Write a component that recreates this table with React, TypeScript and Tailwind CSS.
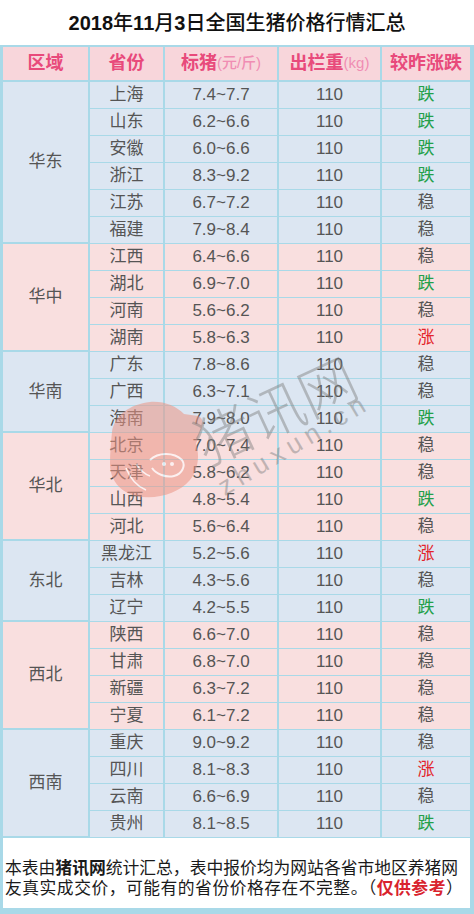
import React from 'react';

type Trend = '跌' | '稳' | '涨';
type Group = { region: string; tone: 'blue' | 'pink'; rows: [string, string, Trend][] };

const groups: Group[] = [
  {
    region: '华东',
    tone: 'blue',
    rows: [
      ['上海', '7.4~7.7', '跌'],
      ['山东', '6.2~6.6', '跌'],
      ['安徽', '6.0~6.6', '跌'],
      ['浙江', '8.3~9.2', '跌'],
      ['江苏', '6.7~7.2', '稳'],
      ['福建', '7.9~8.4', '稳'],
    ],
  },
  {
    region: '华中',
    tone: 'pink',
    rows: [
      ['江西', '6.4~6.6', '稳'],
      ['湖北', '6.9~7.0', '跌'],
      ['河南', '5.6~6.2', '稳'],
      ['湖南', '5.8~6.3', '涨'],
    ],
  },
  {
    region: '华南',
    tone: 'blue',
    rows: [
      ['广东', '7.8~8.6', '稳'],
      ['广西', '6.3~7.1', '稳'],
      ['海南', '7.9~8.0', '跌'],
    ],
  },
  {
    region: '华北',
    tone: 'pink',
    rows: [
      ['北京', '7.0~7.4', '稳'],
      ['天津', '5.8~6.2', '稳'],
      ['山西', '4.8~5.4', '跌'],
      ['河北', '5.6~6.4', '稳'],
    ],
  },
  {
    region: '东北',
    tone: 'blue',
    rows: [
      ['黑龙江', '5.2~5.6', '涨'],
      ['吉林', '4.3~5.6', '稳'],
      ['辽宁', '4.2~5.5', '跌'],
    ],
  },
  {
    region: '西北',
    tone: 'pink',
    rows: [
      ['陕西', '6.6~7.0', '稳'],
      ['甘肃', '6.8~7.0', '稳'],
      ['新疆', '6.3~7.2', '稳'],
      ['宁夏', '6.1~7.2', '稳'],
    ],
  },
  {
    region: '西南',
    tone: 'blue',
    rows: [
      ['重庆', '9.0~9.2', '稳'],
      ['四川', '8.1~8.3', '涨'],
      ['云南', '6.6~6.9', '稳'],
      ['贵州', '8.1~8.5', '跌'],
    ],
  },
];

const trendColor: Record<Trend, string> = {
  跌: 'text-[#23a04a]',
  稳: 'text-[#555555]',
  涨: 'text-[#e3242b]',
};

const cell = 'flex items-center justify-center';

// site watermark laid over the middle of the table
function Watermark() {
  return (
    <div className="pointer-events-none absolute left-0 top-0 h-full w-full">
      <svg className="absolute left-[106px] top-[394px] opacity-55" width="100" height="110" viewBox="0 0 100 110">
        <path
          d="M6 38 C8 22 24 10 44 8 C58 7 70 12 78 20 L92 22 C98 24 98 32 94 38 L90 50 C94 62 92 76 84 86 C72 100 50 106 30 102 C14 98 4 86 4 70 C4 58 5 48 6 38 Z"
          fill="#ec9585"
        />
        <path d="M44 66 C52 58 68 58 76 66 C80 72 76 80 68 82 C60 84 50 80 46 74" fill="none" stroke="#fff" strokeWidth="2" />
        <path d="M20 74 C24 84 30 92 40 96" fill="none" stroke="#fff" strokeWidth="1.6" />
        <path d="M30 70 C34 76 38 80 44 82" fill="none" stroke="#fff" strokeWidth="1.4" />
        <circle cx="58" cy="70" r="2" fill="#fff" />
        <circle cx="66" cy="70" r="2" fill="#fff" />
      </svg>
      <div className="absolute left-[186px] top-[378px] flex h-[60px] w-[176px] -rotate-[25deg] items-center justify-center font-['Noto_Sans_CJK_SC',sans-serif] text-[57px] font-light leading-none text-[#7d7d7d] opacity-45">
        猪讯网
      </div>
      <div className="absolute left-[208px] top-[430px] flex h-[28px] w-[172px] -rotate-[31deg] items-center justify-center font-['Liberation_Sans',sans-serif] text-[26px] leading-none tracking-[6px] text-[#7d7d7d] opacity-45">
        zhuxun.cn
      </div>
    </div>
  );
}

export default function App() {
  return (
    <div className="relative w-[474px] bg-white font-['Liberation_Sans','Noto_Sans_CJK_SC',sans-serif]">
      <div className="flex h-[45px] items-center justify-center text-[20px] text-[#111111]">
        <span className="font-bold">2018</span>
        <span className="font-medium">年</span>
        <span className="font-bold">11</span>
        <span className="font-medium">月</span>
        <span className="font-bold">3</span>
        <span className="font-medium">日全国生猪价格行情汇总</span>
      </div>

      <div className="flex flex-col gap-[2px] bg-[#a9d9e8] pb-[6px] pl-[3px] pr-[4px] pt-[2px]">
        {/* header */}
        <div className="grid h-[33px] grid-cols-[85px_73px_112px_101px_88px] gap-[2px] text-[18px] font-bold text-[#e84a7b]">
          <div className={`${cell} bg-[#f8d6db]`}>区域</div>
          <div className={`${cell} bg-[#f8d6db]`}>省份</div>
          <div className={`${cell} bg-[#f8d6db]`}>
            标猪<span className="text-[15px] font-medium text-[#f08db3]">(元/斤)</span>
          </div>
          <div className={`${cell} bg-[#f8d6db]`}>
            出栏重<span className="text-[15px] font-medium text-[#f08db3]">(kg)</span>
          </div>
          <div className={`${cell} bg-[#f8d6db]`}>较昨涨跌</div>
        </div>

        {groups.map(g => {
          const bg = g.tone === 'blue' ? 'bg-[#dce6f2]' : 'bg-[#f9dfdf]';
          return (
            <div key={g.region} className="flex gap-[2px]">
              <div className={`${cell} w-[85px] shrink-0 text-[17px] text-[#555555] ${bg}`}>{g.region}</div>
              <div className="flex flex-1 flex-col gap-[2px]">
                {g.rows.map(([prov, price, trend]) => (
                  <div key={prov} className="grid h-[25px] grid-cols-[73px_112px_101px_88px] gap-[2px] text-[17px] text-[#555555]">
                    <div className={`${cell} ${bg}`}>{prov}</div>
                    <div className={`${cell} ${bg}`}>{price}</div>
                    <div className={`${cell} ${bg}`}>110</div>
                    <div className={`${cell} ${bg} ${trendColor[trend]}`}>{trend}</div>
                  </div>
                ))}
              </div>
            </div>
          );
        })}

        {/* footer note */}
        <div className="bg-white pb-[11px] pl-[2px] pt-[19px] font-['Noto_Sans_CJK_SC',sans-serif] text-[16.8px] leading-[20px] text-[#1a1a1a]">
          <div className="whitespace-nowrap">
            本表由<span className="font-bold">猪讯网</span>统计汇总，表中报价均为网站各省市地区养猪网
          </div>
          <div className="whitespace-nowrap tracking-[0.5px]">
            友真实成交价，可能有的省份价格存在不完整。（<span className="font-bold text-[#d9232d]">仅供参考</span>）
          </div>
        </div>
      </div>

      <Watermark />
    </div>
  );
}
